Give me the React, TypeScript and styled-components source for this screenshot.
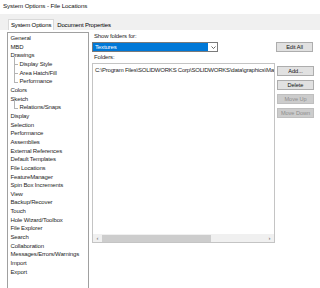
import React from 'react';
import styled, { createGlobalStyle } from 'styled-components';

const fontFamily = '"Liberation Sans", Arial, sans-serif';

const GlobalStyle = createGlobalStyle`
  html, body {
    margin: 0;
    padding: 0;
    background: #fff;
  }
  body {
    font-family: ${fontFamily};
    font-size: 6px;
    letter-spacing: -0.15px;
    color: #262626;
  }
`;

const Window = styled.div`
  width: 320px;
  height: 288px;
  overflow: hidden;
  display: flex;
  flex-direction: column;
  background: #fff;
`;

const TitleBar = styled.div`
  height: 14px;
  line-height: 12px;
  padding-left: 3px;
  font-size: 6.2px;
  letter-spacing: -0.1px;
  color: #111;
`;

const TabStrip = styled.div`
  height: 16px;
  background: #f0f0f0;
  display: flex;
  align-items: flex-end;
  padding-left: 8px;
`;

const Tab = styled.div<{ active?: boolean }>`
  height: 11px;
  line-height: 11px;
  padding: 0 2px;
  background: ${(p) => (p.active ? '#fff' : 'transparent')};
  border: 1px solid ${(p) => (p.active ? '#d9d9d9' : 'transparent')};
  border-bottom: none;
  box-sizing: border-box;
  color: #000;
`;

const Body = styled.div`
  flex: 1;
  display: flex;
  padding: 2px 0 0 7px;
  min-height: 0;
`;

const Tree = styled.ul`
  list-style: none;
  margin: 0;
  padding: 1px 0 0 0;
  width: 82px;
  height: 274px;
  border: 1px solid #a0a0a0;
  box-sizing: border-box;
  flex-shrink: 0;
`;

const TreeItem = styled.li<{ child?: boolean; last?: boolean }>`
  position: relative;
  height: 8.66px;
  line-height: 8.66px;
  padding-left: ${(p) => (p.child ? '11.5px' : '2.5px')};
  white-space: nowrap;

  ${(p) =>
    p.child &&
    `
    &::before {
      content: '';
      position: absolute;
      left: 6px;
      top: -3px;
      height: ${p.last ? '7.3px' : '8.66px'};
      border-left: 1px solid #b4b4b4;
    }
    &::after {
      content: '';
      position: absolute;
      left: 6px;
      top: 4.3px;
      width: 4px;
      border-top: 1px solid #b4b4b4;
    }
  `}
`;

const Right = styled.div`
  flex: 1;
  display: flex;
  flex-direction: column;
  padding-left: 3px;
`;

const Label = styled.div<{ gap?: number }>`
  height: 9px;
  line-height: 8px;
  margin-left: 2px;
  margin-top: ${(p) => p.gap ?? 0}px;
`;

const Row = styled.div<{ gap?: number }>`
  display: flex;
  align-items: flex-start;
  margin-top: ${(p) => p.gap ?? 0}px;
`;

const Select = styled.div`
  width: 124px;
  height: 8px;
  border: 1px solid #7a7a7a;
  display: flex;
  background: #fff;
`;

const SelectValue = styled.div`
  flex: 1;
  background: #0078d7;
  color: #fff;
  line-height: 8px;
  padding-left: 2px;
  margin-right: 1px;
`;

const Arrow = styled.div`
  width: 8px;
  display: flex;
  align-items: center;
  justify-content: center;
`;

const Button = styled.div<{ disabled?: boolean }>`
  width: 35px;
  height: 8px;
  line-height: 8px;
  text-align: center;
  font-size: 5.6px;
  letter-spacing: -0.05px;
  background: ${(p) => (p.disabled ? '#cccccc' : '#e1e1e1')};
  border: 1px solid ${(p) => (p.disabled ? '#bfbfbf' : '#adadad')};
  color: ${(p) => (p.disabled ? '#8d8d8d' : '#111')};
`;

const Spacer = styled.div`
  flex: 1;
`;

const EditAllSlot = styled.div`
  margin-right: 7px;
`;

const ListBox = styled.div`
  width: 183px;
  height: 180px;
  border: 1px solid #c4c4c4;
  box-sizing: border-box;
  display: flex;
  flex-direction: column;
  overflow: hidden;
`;

const ListText = styled.div`
  flex: 1;
  padding: 2px 0 0 2px;
  line-height: 8px;
  letter-spacing: -0.22px;
  white-space: nowrap;
  overflow: hidden;
`;

const HScroll = styled.div`
  height: 8px;
  background: #f0f0f0;
  display: flex;
  align-items: center;
  font-size: 6px;
  color: #606060;
`;

const ScrollArrow = styled.div`
  width: 9px;
  text-align: center;
  line-height: 8px;
`;

const Thumb = styled.div`
  height: 7px;
  background: #cdcdcd;
`;

const ButtonColumn = styled.div`
  display: flex;
  flex-direction: column;
  gap: 4px;
  margin-left: 2px;
  padding-top: 2.5px;
`;

const treeItems: { label: string; child?: boolean; last?: boolean }[] = [
  { label: 'General' },
  { label: 'MBD' },
  { label: 'Drawings' },
  { label: 'Display Style', child: true },
  { label: 'Area Hatch/Fill', child: true },
  { label: 'Performance', child: true, last: true },
  { label: 'Colors' },
  { label: 'Sketch' },
  { label: 'Relations/Snaps', child: true, last: true },
  { label: 'Display' },
  { label: 'Selection' },
  { label: 'Performance' },
  { label: 'Assemblies' },
  { label: 'External References' },
  { label: 'Default Templates' },
  { label: 'File Locations' },
  { label: 'FeatureManager' },
  { label: 'Spin Box Increments' },
  { label: 'View' },
  { label: 'Backup/Recover' },
  { label: 'Touch' },
  { label: 'Hole Wizard/Toolbox' },
  { label: 'File Explorer' },
  { label: 'Search' },
  { label: 'Collaboration' },
  { label: 'Messages/Errors/Warnings' },
  { label: 'Import' },
  { label: 'Export' },
];

const App = () => {
  return (
    <>
      <GlobalStyle />
      <Window>
        <TitleBar>System Options - File Locations</TitleBar>
        <TabStrip>
          <Tab active>System Options</Tab>
          <Tab>Document Properties</Tab>
        </TabStrip>
        <Body>
          <Tree>
            {treeItems.map((item, i) => (
              <TreeItem key={i} child={item.child} last={item.last}>
                {item.label}
              </TreeItem>
            ))}
          </Tree>
          <Right>
            <Label>Show folders for:</Label>
            <Row gap={1}>
              <Select>
                <SelectValue>Textures</SelectValue>
                <Arrow>
                  <svg width="5" height="3" viewBox="0 0 5 3">
                    <path d="M0.5 0.5 L2.5 2.5 L4.5 0.5" stroke="#444" strokeWidth="0.8" fill="none" />
                  </svg>
                </Arrow>
              </Select>
              <Spacer />
              <EditAllSlot>
                <Button>Edit All</Button>
              </EditAllSlot>
            </Row>
            <Label gap={1}>Folders:</Label>
            <Row gap={1}>
              <ListBox>
                <ListText>C:\Program Files\SOLIDWORKS Corp\SOLIDWORKS\data\graphics\Mater</ListText>
                <HScroll>
                  <ScrollArrow>‹</ScrollArrow>
                  <Thumb style={{ width: 109 }} />
                  <Spacer />
                  <ScrollArrow>›</ScrollArrow>
                </HScroll>
              </ListBox>
              <ButtonColumn>
                <Button>Add...</Button>
                <Button>Delete</Button>
                <Button disabled>Move Up</Button>
                <Button disabled>Move Down</Button>
              </ButtonColumn>
            </Row>
          </Right>
        </Body>
      </Window>
    </>
  );
};

export default App;
